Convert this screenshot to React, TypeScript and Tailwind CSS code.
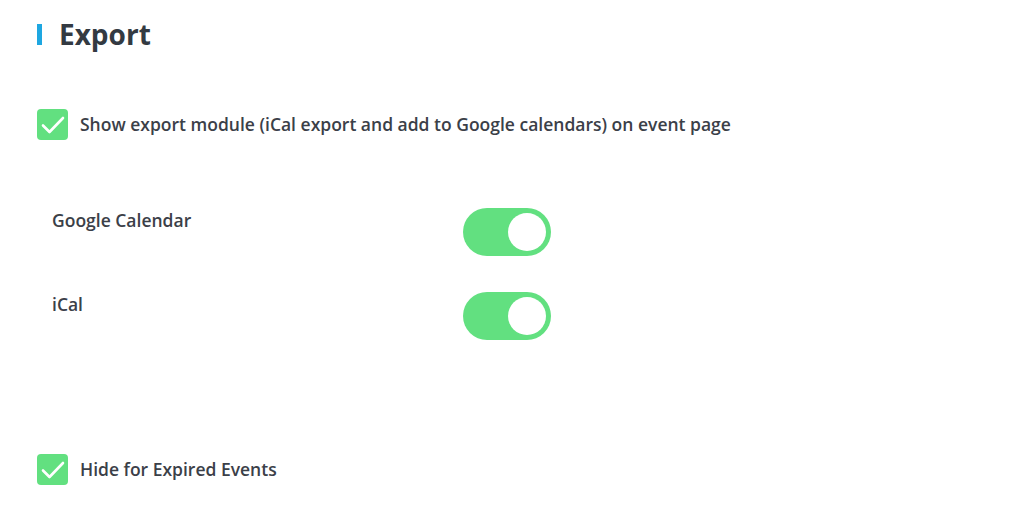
import React from 'react';

function Check() {
  return (
    <span className="flex h-[31px] w-[31px] shrink-0 items-center justify-center rounded-[4px] bg-[#62e080]">
      <svg width="24" height="20" viewBox="0 0 24 20" fill="none">
        <path d="M2 10.5 L8.5 17 L22 3" stroke="white" strokeWidth="2.6" strokeLinecap="round" strokeLinejoin="round" />
      </svg>
    </span>
  );
}

function Toggle() {
  return (
    <span className="flex h-[48px] w-[88px] items-center justify-end rounded-full bg-[#62e080] pr-[5px]">
      <span className="h-[38px] w-[38px] rounded-full bg-white" />
    </span>
  );
}

export default function App() {
  return (
    <div className="h-[518px] w-[1024px] bg-white text-[#3b4048]" style={{ fontFamily: '"Open Sans", "Noto Sans", sans-serif' }}>
      <div className="flex items-center pl-[37px] pt-[18px]">
        <span className="h-[21px] w-[5px] bg-[#1ea7e1]" />
        <h1 className="ml-[17px] text-[28px] font-bold leading-[32px] text-[#333a42]">Export</h1>
      </div>

      <div className="mt-[59px] flex items-center gap-[12px] pl-[37px]">
        <Check />
        <span className="text-[17.5px] font-semibold">Show export module (iCal export and add to Google calendars) on event page</span>
      </div>

      <div className="mt-[68px] flex flex-col gap-[36px] pl-[52px]">
        <div className="flex items-start">
          <span className="w-[411px] text-[17.5px] font-semibold leading-[24px]">Google Calendar</span>
          <Toggle />
        </div>
        <div className="flex items-start">
          <span className="w-[411px] text-[17.5px] font-semibold leading-[24px]">iCal</span>
          <Toggle />
        </div>
      </div>

      <div className="mt-[114px] flex items-center gap-[12px] pl-[37px]">
        <Check />
        <span className="text-[17.5px] font-semibold">Hide for Expired Events</span>
      </div>
    </div>
  );
}
